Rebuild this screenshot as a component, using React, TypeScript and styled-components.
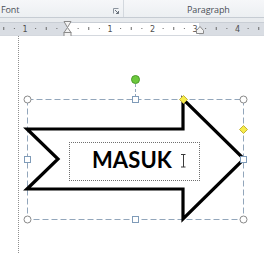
import React from "react";
import styled, { createGlobalStyle } from "styled-components";

const Global = createGlobalStyle`
  html, body { margin: 0; padding: 0; background: #ffffff; }
  body { width: 264px; height: 253px; overflow: hidden; font-family: "Open Sans", "Noto Sans", sans-serif; }
`;

const Screen = styled.div`
  width: 264px;
  height: 253px;
  display: flex;
  flex-direction: column;
  overflow: hidden;
  background: #ffffff;
`;

const Ribbon = styled.div`
  height: 17px;
  flex: none;
  display: flex;
  background: linear-gradient(#f6f7f9, #eceff2);
  border-bottom: 1px solid #c6ccd3;
`;

const Group = styled.div<{ $width?: number; $pad?: number; $divider?: boolean }>`
  ${(p) => (p.$width ? `width: ${p.$width}px; flex: none;` : "flex: 1;")}
  display: flex;
  align-items: center;
  padding-left: ${(p) => p.$pad ?? 0}px;
  box-sizing: border-box;
  border-right: ${(p) => (p.$divider ? "1px solid #d3d8de" : "none")};
  position: relative;
`;

const GroupLabel = styled.span`
  font-family: "Open Sans", "Noto Sans", sans-serif;
  font-size: 9px;
  line-height: 12px;
  color: #4a4f57;
  margin-top: 2px;
  letter-spacing: -0.1px;
`;

const Launcher = styled.svg`
  position: absolute;
  right: 4px;
  top: 8px;
`;

const Strip = styled.div`
  height: 4px;
  flex: none;
  background: #e8ebee;
`;

const Ruler = styled.div`
  height: 14px;
  flex: none;
  display: flex;
  position: relative;
  background: #d9dde3;
  border-top: 1px solid #c9ced5;
  border-bottom: 1px solid #d4d8de;
  box-sizing: border-box;
`;

const RulerSpan = styled.div<{ $width?: number; $white?: boolean }>`
  ${(p) => (p.$width ? `width: ${p.$width}px; flex: none;` : "flex: 1;")}
  background: ${(p) => (p.$white ? "#ffffff" : "transparent")};
`;

const RulerMarks = styled.svg`
  position: absolute;
  left: 0;
  top: -2px;
  overflow: visible;
`;

const Page = styled.div`
  flex: 1;
  position: relative;
  background: #ffffff;
`;

const Canvas = styled.svg`
  position: absolute;
  left: 0;
  top: 0;
`;

const TextBox = styled.div`
  position: absolute;
  left: 69px;
  top: 106px;
  width: 131px;
  height: 39px;
  box-sizing: border-box;
  border: 1px dotted #6f6f6f;
  display: flex;
  align-items: center;
  justify-content: center;
  padding-right: 5px;
  padding-bottom: 3px;
`;

const ShapeText = styled.span`
  font-family: Lato, "Open Sans", sans-serif;
  font-weight: 700;
  font-size: 22px;
  line-height: 24px;
  color: #000000;
  letter-spacing: 0.1px;
`;

const origin = 67.5;
const step = 10.625;

function RulerTicks() {
  const items: React.ReactNode[] = [];
  for (let k = -6; k <= 18; k++) {
    const x = origin + k * step;
    if (k === 0) continue;
    const m = ((k % 4) + 4) % 4;
    if (m === 0) {
      const n = Math.abs(k / 4);
      items.push(
        <text
          key={k}
          x={x}
          y={10.5}
          textAnchor="middle"
          fontSize="8"
          fontFamily="'DejaVu Sans', sans-serif"
          fill="#505050"
        >
          {n}
        </text>
      );
    } else if (m === 2) {
      items.push(<rect key={k} x={x - 0.5} y={6} width={1} height={3} fill="#6a6a6a" />);
    } else {
      items.push(<rect key={k} x={x - 0.5} y={7} width={1} height={1} fill="#6a6a6a" />);
    }
  }
  return (
    <RulerMarks width={264} height={18} viewBox="0 0 264 18">
      {items}
      <path d="M64 0.5 H71 L67.5 6.5 Z" fill="#f2f2f2" stroke="#8a8a8a" strokeWidth="1" />
      <path d="M67.5 6.5 L71 11.5 H64 Z" fill="#f2f2f2" stroke="#8a8a8a" strokeWidth="1" />
      <rect x={64} y={11.5} width={7} height={5} fill="#f2f2f2" stroke="#8a8a8a" strokeWidth="1" />
      <path d="M196.5 12.5 V9.5 L200 5.5 L203.5 9.5 V12.5 Z" fill="#f2f2f2" stroke="#8a8a8a" strokeWidth="1" />
    </RulerMarks>
  );
}

function Diamond({ x, y }: { x: number; y: number }) {
  return (
    <path
      d={`M${x} ${y - 4} L${x + 4} ${y} L${x} ${y + 4} L${x - 4} ${y} Z`}
      fill="#f6ec4a"
      stroke="#c2b13a"
      strokeWidth="1"
    />
  );
}

function Corner({ x, y }: { x: number; y: number }) {
  return <circle cx={x} cy={y} r={3.5} fill="#ffffff" stroke="#8a8a8a" strokeWidth="1" />;
}

function Side({ x, y }: { x: number; y: number }) {
  return <rect x={x - 3} y={y - 3} width={6} height={6} fill="#ffffff" stroke="#7f9bb8" strokeWidth="1" />;
}

export default function App() {
  return (
    <>
      <Global />
      <Screen>
        <Ribbon>
          <Group $width={124} $pad={1} $divider>
            <GroupLabel>Font</GroupLabel>
            <Launcher width={6} height={6} viewBox="0 0 6 6">
              <path d="M0.5 5.5 V0.5 H5.5" fill="none" stroke="#8c949e" strokeWidth="1" />
              <path d="M2 2 L5.5 5.5 M5.5 3 V5.5 H3" fill="none" stroke="#6b737d" strokeWidth="1" />
            </Launcher>
          </Group>
          <Group $pad={63}>
            <GroupLabel>Paragraph</GroupLabel>
          </Group>
        </Ribbon>
        <Strip />
        <Ruler>
          <RulerSpan $width={67} />
          <RulerSpan $width={132} $white />
          <RulerSpan />
          <RulerTicks />
        </Ruler>
        <Page>
          <Canvas width={264} height={217} viewBox="0 36 264 217">
            <line x1={18.5} y1={36} x2={18.5} y2={253} stroke="#8f8f8f" strokeWidth="1" strokeDasharray="1 1" />
            <rect x={27.5} y={99.5} width={216} height={120} fill="none" stroke="#92a6bb" strokeWidth="1" strokeDasharray="6 3" />
            <line x1={135.5} y1={84} x2={135.5} y2={96} stroke="#92a6bb" strokeWidth="1" strokeDasharray="3 2" />
            <path
              d="M27 129 H183 V99 L244 159 L183 219 V189 H27 L58 159 Z"
              fill="#ffffff"
              stroke="#000000"
              strokeWidth="3.2"
              strokeLinejoin="miter"
            />
            <circle cx={135.5} cy={79.5} r={4} fill="#6cc93c" stroke="#4b9a2b" strokeWidth="1" />
            <Corner x={27.5} y={99.5} />
            <Corner x={243.5} y={99.5} />
            <Corner x={27.5} y={219.5} />
            <Corner x={243.5} y={219.5} />
            <Side x={135.5} y={99.5} />
            <Side x={27.5} y={159.5} />
            <Side x={243.5} y={159.5} />
            <Side x={135.5} y={219.5} />
            <Diamond x={183.5} y={99.5} />
            <Diamond x={243.5} y={129.5} />
            <path
              d="M181 154.5 H185.5 M183.5 154.5 V167 M181 167 H185.5"
              fill="none"
              stroke="#3a3a3a"
              strokeWidth="1"
            />
          </Canvas>
          <TextBox>
            <ShapeText>MASUK</ShapeText>
          </TextBox>
        </Page>
      </Screen>
    </>
  );
}
